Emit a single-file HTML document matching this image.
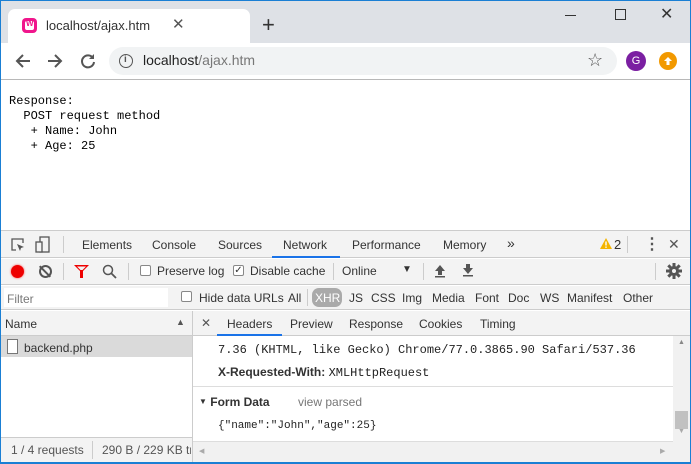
<!DOCTYPE html>
<html><head><meta charset="utf-8"><style>
*{margin:0;padding:0;box-sizing:border-box}
body{width:691px;height:464px;overflow:hidden;position:relative;background:#fff;font-family:"Liberation Sans",sans-serif;font-size:12px;color:#333}
.a{position:absolute}
.win{position:absolute;left:0;top:0;width:691px;height:464px;border:1px solid #1a7fd4;border-bottom-width:2px;pointer-events:none;z-index:10}
.t{position:absolute;white-space:nowrap}
.mono{font-family:"Liberation Mono",monospace}
.dv{font-size:12px;color:#333}
.sep{position:absolute;width:1px;background:#ccc}
</style></head><body>
<div class="win"></div>
<!-- title bar -->
<div class="a" style="left:0;top:0;width:691px;height:43px;background:#dee1e6"></div>
<div class="a" style="left:8px;top:9px;width:242px;height:35px;background:#fff;border-radius:7px 7px 0 0"></div>
<div class="a" style="left:22px;top:18px;width:15px;height:15px;background:#f0168c;border-radius:4px"></div>
<div class="a" style="left:25px;top:21px;width:9px;height:9px;background:#fff;border-radius:2px"></div>
<div class="t" style="left:26px;top:19px;font-size:8px;color:#f0168c;font-weight:bold">W</div>
<div class="t" style="left:46px;top:18px;font-size:13px;color:#333">localhost/ajax.htm</div>
<div class="t" style="left:172px;top:15px;font-size:15px;color:#555">✕</div>
<div class="t" style="left:262px;top:12px;font-size:22px;color:#333">+</div>
<div class="a" style="left:565px;top:15px;width:11px;height:1px;background:#333"></div>
<div class="a" style="left:615px;top:9px;width:11px;height:11px;border:1px solid #333"></div>
<div class="t" style="left:660px;top:4px;font-size:16px;color:#333">✕</div>
<!-- toolbar -->
<svg class="a" style="left:14px;top:52px" width="18" height="18" viewBox="0 0 18 18"><path d="M16 9H3M9 3L3 9l6 6" stroke="#555" stroke-width="2" fill="none"/></svg>
<svg class="a" style="left:46px;top:52px" width="18" height="18" viewBox="0 0 18 18"><path d="M2 9h13M9 3l6 6-6 6" stroke="#555" stroke-width="2" fill="none"/></svg>
<svg class="a" style="left:79px;top:52px" width="18" height="18" viewBox="0 0 18 18"><path d="M14 6A6 6 0 1 0 15 10" stroke="#555" stroke-width="2" fill="none"/><path d="M15 2v5h-5z" fill="#555"/></svg>
<div class="a" style="left:109px;top:47px;width:508px;height:28px;background:#f1f3f4;border-radius:14px"></div>
<div class="a" style="left:119px;top:54px;width:14px;height:14px;border:1.6px solid #555;border-radius:50%"></div>
<div class="t" style="left:124px;top:54px;font-size:10px;color:#555;font-weight:bold">i</div>
<div class="t" style="left:143px;top:52px;font-size:14px;color:#222">localhost<span style="color:#777">/ajax.htm</span></div>
<div class="t" style="left:587px;top:50px;font-size:18px;color:#555">☆</div>
<div class="a" style="left:626px;top:51px;width:20px;height:20px;border-radius:50%;background:#7b1fa2;color:#fff;font-size:11px;text-align:center;line-height:20px">G</div>
<div class="a" style="left:659px;top:52px;width:18px;height:18px;border-radius:50%;background:#f29900"></div>
<svg class="a" style="left:662px;top:55px" width="12" height="12" viewBox="0 0 12 12"><path d="M6 2L2 6h2.5v4h3V6H10z" fill="#fff"/></svg>
<div class="a" style="left:0;top:79px;width:691px;height:1px;background:#b8b8b8"></div>
<!-- page -->
<pre class="a mono" style="left:9px;top:94px;font-size:12px;line-height:15px;color:#000;white-space:pre">Response:
  POST request method
   + Name: John
   + Age: 25</pre>
<!-- devtools -->
<div class="a" style="left:0;top:230px;width:691px;height:1px;background:#ccc"></div>
<div class="a" style="left:0;top:231px;width:691px;height:27px;background:#f3f3f3;border-bottom:1px solid #ccc"></div>
<svg class="a" style="left:10px;top:237px" width="16" height="16" viewBox="0 0 16 16"><path d="M6 13H2V2h11v4" stroke="#555" stroke-width="1.3" fill="none"/><path d="M7 7l7 3-3 1-1 3z" fill="#555"/></svg>
<svg class="a" style="left:35px;top:236px" width="16" height="17" viewBox="0 0 16 17"><rect x="5" y="1" width="9" height="15" stroke="#555" stroke-width="1.3" fill="none"/><rect x="1" y="6" width="6" height="10" stroke="#555" stroke-width="1.3" fill="#f3f3f3"/></svg>
<div class="sep" style="left:63px;top:236px;height:17px"></div>
<div class="t dv" style="left:82px;top:238px">Elements</div>
<div class="t dv" style="left:152px;top:238px">Console</div>
<div class="t dv" style="left:218px;top:238px">Sources</div>
<div class="t dv" style="left:283px;top:238px">Network</div>
<div class="a" style="left:272px;top:256px;width:68px;height:2px;background:#1a73e8"></div>
<div class="t dv" style="left:352px;top:238px">Performance</div>
<div class="t dv" style="left:443px;top:238px">Memory</div>
<div class="t dv" style="left:507px;top:235px;font-size:14px">»</div>
<svg class="a" style="left:600px;top:238px" width="12" height="11" viewBox="0 0 12 11"><path d="M6 0L12 11H0z" fill="#f4b400"/><rect x="5.3" y="3.5" width="1.4" height="4" fill="#fff"/><rect x="5.3" y="8.5" width="1.4" height="1.4" fill="#fff"/></svg>
<div class="t dv" style="left:614px;top:237px;font-size:13px">2</div>
<div class="sep" style="left:627px;top:236px;height:17px"></div>
<div class="t dv" style="left:644px;top:234px;font-size:16px;font-weight:bold;color:#555">⋮</div>
<div class="t dv" style="left:668px;top:236px;font-size:14px;color:#555">✕</div>
<!-- network toolbar -->
<div class="a" style="left:0;top:259px;width:691px;height:26px;background:#f3f3f3;border-bottom:1px solid #ccc"></div>
<div class="a" style="left:11px;top:265px;width:13px;height:13px;border-radius:50%;background:#e00;box-shadow:0 0 2px #f44"></div>
<div class="a" style="left:39px;top:265px;width:13px;height:13px;border-radius:50%;border:2px solid #555"></div>
<div class="a" style="left:44px;top:264px;width:2px;height:15px;background:#555;transform:rotate(-45deg)"></div>
<div class="sep" style="left:63px;top:263px;height:17px"></div>
<svg class="a" style="left:74px;top:265px" width="15" height="13" viewBox="0 0 15 13"><path d="M0 0h15L9 6v7H6V6z" fill="#e00"/><path d="M3 1.5h9L8.5 5h-2z" fill="#f3f3f3"/></svg>
<svg class="a" style="left:102px;top:264px" width="15" height="15" viewBox="0 0 15 15"><circle cx="6" cy="6" r="4.5" stroke="#555" stroke-width="1.5" fill="none"/><path d="M9.5 9.5L14 14" stroke="#555" stroke-width="1.8"/></svg>
<div class="sep" style="left:128px;top:263px;height:17px"></div>
<div class="a" style="left:140px;top:265px;width:11px;height:11px;border:1px solid #888;border-radius:2px;background:#fff"></div>
<div class="t dv" style="left:157px;top:264px">Preserve log</div>
<div class="a" style="left:233px;top:265px;width:11px;height:11px;border:1px solid #888;border-radius:2px;background:#fff;font-size:10px;line-height:9px;text-align:center;color:#333">✓</div>
<div class="t dv" style="left:250px;top:264px">Disable cache</div>
<div class="sep" style="left:333px;top:263px;height:17px"></div>
<div class="t dv" style="left:342px;top:264px">Online</div>
<div class="t dv" style="left:402px;top:264px;font-size:10px">▼</div>
<div class="sep" style="left:423px;top:263px;height:17px"></div>
<svg class="a" style="left:434px;top:265px" width="12" height="13" viewBox="0 0 12 13"><path d="M6 0L11 6H8v4H4V6H1z" fill="#555"/><rect x="1" y="11" width="10" height="1.5" fill="#555"/></svg>
<svg class="a" style="left:462px;top:264px" width="12" height="13" viewBox="0 0 12 13"><path d="M6 10L11 4H8V0H4v4H1z" fill="#555"/><rect x="1" y="11" width="10" height="1.5" fill="#555"/></svg>
<div class="sep" style="left:655px;top:263px;height:17px"></div>
<svg class="a" style="left:666px;top:263px" width="16" height="16" viewBox="0 0 16 16"><circle cx="8" cy="8" r="5" fill="#555"/><g stroke="#555" stroke-width="3"><path d="M8 0v16M0 8h16M2.3 2.3l11.4 11.4M13.7 2.3L2.3 13.7"/></g><circle cx="8" cy="8" r="2" fill="#f3f3f3"/></svg>
<!-- filter row -->
<div class="a" style="left:0;top:286px;width:691px;height:24px;background:#f3f3f3;border-bottom:1px solid #ccc"></div>
<div class="a" style="left:4px;top:288px;width:164px;height:19px;background:#fff"></div>
<div class="t" style="left:7px;top:292px;color:#777">Filter</div>
<div class="a" style="left:181px;top:291px;width:11px;height:11px;border:1px solid #888;border-radius:2px;background:#fff"></div>
<div class="t dv" style="left:199px;top:291px">Hide data URLs</div>
<div class="t dv" style="left:288px;top:291px">All</div>
<div class="sep" style="left:307px;top:289px;height:17px"></div>
<div class="a" style="left:312px;top:288px;width:30px;height:19px;background:#aaa;border-radius:7px"></div>
<div class="t" style="left:315px;top:291px;color:#fff">XHR</div>
<div class="t dv" style="left:349px;top:291px">JS</div>
<div class="t dv" style="left:371px;top:291px">CSS</div>
<div class="t dv" style="left:402px;top:291px">Img</div>
<div class="t dv" style="left:432px;top:291px">Media</div>
<div class="t dv" style="left:475px;top:291px">Font</div>
<div class="t dv" style="left:508px;top:291px">Doc</div>
<div class="t dv" style="left:540px;top:291px">WS</div>
<div class="t dv" style="left:567px;top:291px">Manifest</div>
<div class="t dv" style="left:623px;top:291px">Other</div>
<!-- left panel -->
<div class="a" style="left:0;top:311px;width:192px;height:25px;background:#f3f3f3;border-bottom:1px solid #ccc"></div>
<div class="t dv" style="left:5px;top:317px">Name</div>
<div class="t dv" style="left:176px;top:317px;font-size:9px;color:#555">▲</div>
<div class="a" style="left:0;top:336px;width:192px;height:21px;background:#dadada"></div>
<div class="a" style="left:7px;top:339px;width:11px;height:15px;border:1px solid #777;background:#fff"></div>
<div class="t dv" style="left:24px;top:341px">backend.php</div>
<div class="a" style="left:192px;top:311px;width:1px;height:153px;background:#ccc"></div>
<div class="a" style="left:0;top:437px;width:192px;height:26px;background:#f3f3f3;border-top:1px solid #ccc"></div>
<div class="t dv" style="left:11px;top:443px;color:#555">1 / 4 requests</div>
<div class="sep" style="left:92px;top:441px;height:18px"></div>
<div class="t dv" style="left:102px;top:443px;color:#555;width:89px;overflow:hidden">290 B / 229 KB transferred</div>
<!-- right panel -->
<div class="a" style="left:193px;top:311px;width:498px;height:25px;background:#f3f3f3;border-bottom:1px solid #ccc"></div>
<div class="t dv" style="left:201px;top:316px;font-size:12px;color:#555">✕</div>
<div class="t dv" style="left:227px;top:317px">Headers</div>
<div class="a" style="left:217px;top:334px;width:65px;height:2px;background:#1a73e8"></div>
<div class="t dv" style="left:290px;top:317px">Preview</div>
<div class="t dv" style="left:349px;top:317px">Response</div>
<div class="t dv" style="left:419px;top:317px">Cookies</div>
<div class="t dv" style="left:480px;top:317px">Timing</div>
<div class="t mono" style="left:218px;top:343px;font-size:12px;color:#222">7.36 (KHTML, like Gecko) Chrome/77.0.3865.90 Safari/537.36</div>
<div class="t" style="left:218px;top:365px;font-weight:bold;color:#333">X-Requested-With: <span class="mono" style="font-weight:normal;color:#222">XMLHttpRequest</span></div>
<div class="a" style="left:193px;top:386px;width:480px;height:1px;background:#ddd"></div>
<div class="t" style="left:199px;top:395px;font-weight:bold;color:#333"><span style="font-size:8px;position:relative;top:-2px">▼</span> Form Data</div>
<div class="t" style="left:298px;top:395px;color:#777">view parsed</div>
<div class="t mono" style="left:218px;top:420px;font-size:11px;color:#222">{"name":"John","age":25}</div>
<div class="a" style="left:193px;top:441px;width:480px;height:1px;background:#ddd"></div>
<div class="a" style="left:193px;top:442px;width:498px;height:21px;background:#f1f1f1"></div>
<div class="t" style="left:199px;top:447px;font-size:7px;color:#aaa">◀</div>
<div class="t" style="left:660px;top:447px;font-size:7px;color:#aaa">▶</div>
<div class="a" style="left:673px;top:336px;width:18px;height:106px;background:#f1f1f1"></div>
<div class="t" style="left:678px;top:339px;font-size:7px;color:#888">▲</div>
<div class="t" style="left:678px;top:428px;font-size:7px;color:#aaa">▼</div>
<div class="a" style="left:675px;top:411px;width:13px;height:18px;background:#c1c1c1"></div>
</body></html>
